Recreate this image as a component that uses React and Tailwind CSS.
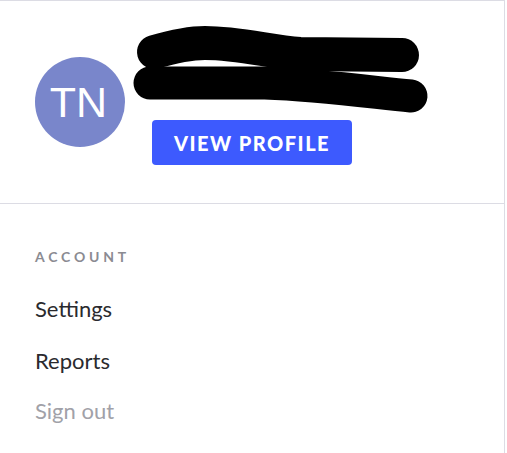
import React from "react";

export default function App() {
  return (
    <div className="w-[507px] h-[453px] bg-white" style={{ fontFamily: "Lato, 'Liberation Sans', sans-serif" }}>
      <div className="w-[505px] h-[453px] border-t border-r border-[#dcdce4] flex flex-col">
        <div className="h-[203px] border-b border-[#dcdce4] flex items-start pl-[35px] pt-[21px]">
          <div className="mt-[35px] w-[90px] h-[90px] rounded-full bg-[#7986cb] flex items-center justify-center shrink-0">
            <span className="text-white text-[43px] leading-none -ml-[3px]" style={{ fontFamily: "'Liberation Sans', Arial, sans-serif" }}>TN</span>
          </div>
          <div className="flex flex-col ml-[5px]">
            <svg width="300" height="96" viewBox="130 22 300 96" className="block">
              <path d="M154,52 C175,46 190,43 205,43 C240,43 270,52 300,54 L402,55" fill="none" stroke="#000" strokeWidth="34" strokeLinecap="round" strokeLinejoin="round" />
              <path d="M150,83 L265,83 C320,85 370,92 411,96" fill="none" stroke="#000" strokeWidth="33" strokeLinecap="round" strokeLinejoin="round" />
            </svg>
            <button className="ml-[22px] mt-[2px] w-[200px] h-[45px] rounded-[4px] bg-[#3d5afe] text-white text-[20px] font-black tracking-[1.5px] flex items-center justify-center" style={{ fontFamily: "Lato, 'Liberation Sans', Arial, sans-serif" }}>
              VIEW PROFILE
            </button>
          </div>
        </div>
        <div className="pl-[35px] pt-[45px] flex flex-col">
          <div className="text-[14px] font-bold tracking-[3.8px] text-[#8b8b92] leading-[16px]">ACCOUNT</div>
          <div className="mt-[31px] text-[22px] text-[#2a2a2e] leading-[26px]">Settings</div>
          <div className="mt-[26px] text-[22px] text-[#2a2a2e] leading-[26px]">Reports</div>
          <div className="mt-[24px] text-[22px] text-[#a1a1a8] leading-[26px]">Sign out</div>
        </div>
      </div>
    </div>
  );
}
